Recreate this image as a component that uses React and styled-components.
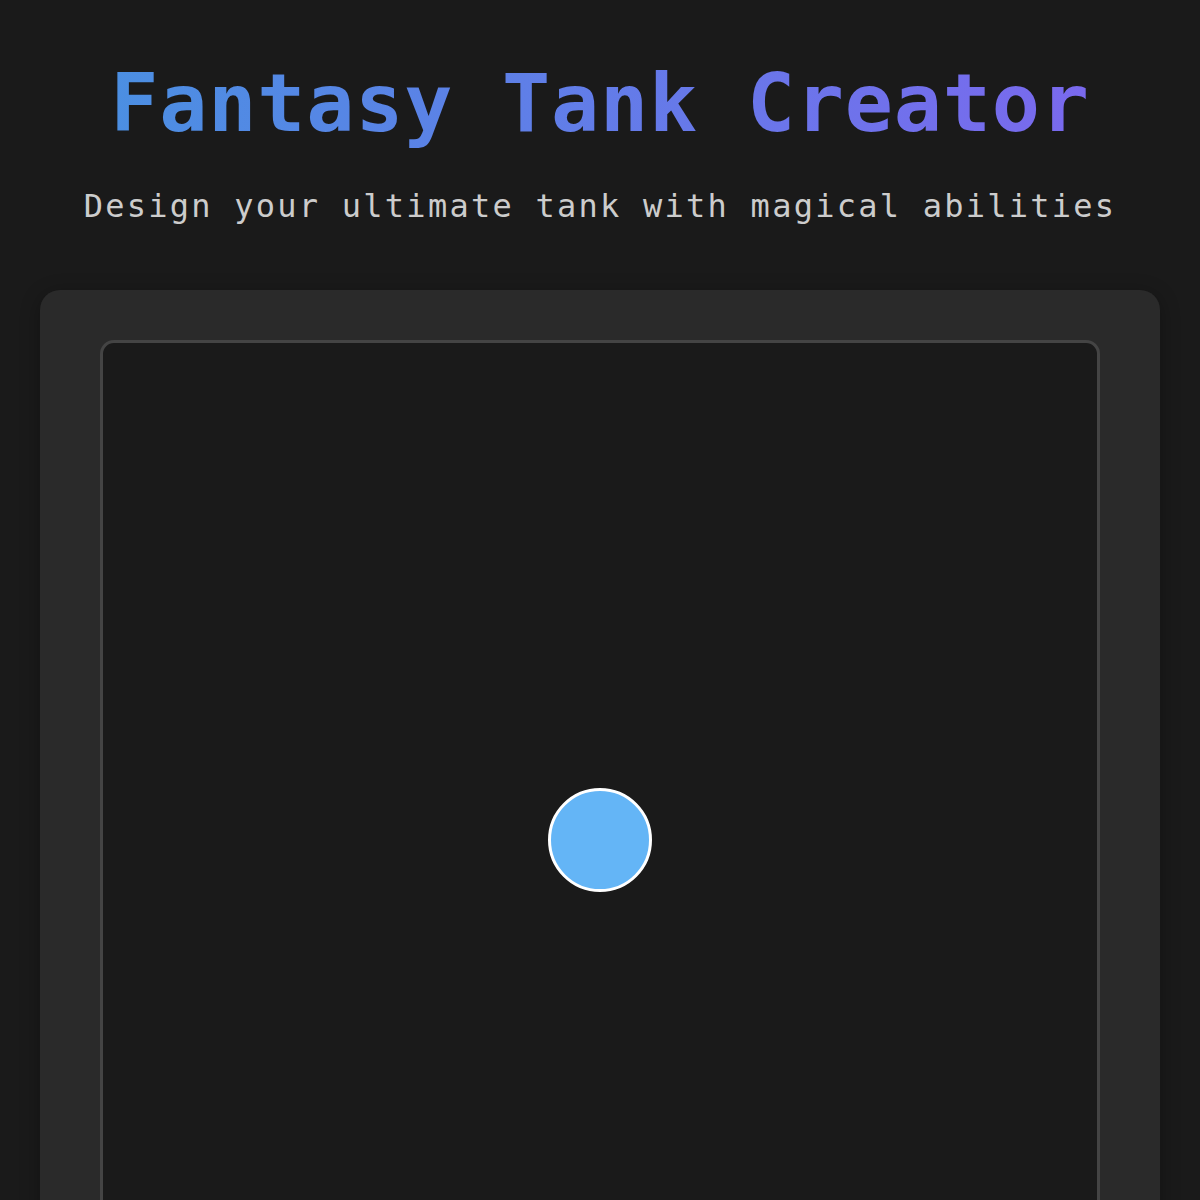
import React from 'react';
import styled, { createGlobalStyle } from 'styled-components';

const GlobalStyle = createGlobalStyle`
  html, body {
    margin: 0;
    padding: 0;
    background: #1a1a1a;
  }
  body {
    font-family: "DejaVu Sans Mono", "Liberation Mono", monospace;
    color: #e0e0e0;
  }
`;

const Page = styled.div`
  min-height: 1200px;
  padding: 56px 40px 0;
  box-sizing: border-box;
  display: flex;
  flex-direction: column;
  align-items: center;
`;

const Header = styled.header`
  text-align: center;
  margin-bottom: 65px;
`;

const Title = styled.h1`
  margin: 0;
  font-size: 80px;
  font-weight: 700;
  line-height: 1.2;
  letter-spacing: 0.8px;
  background: linear-gradient(90deg, #4a90e2, #7b68ee);
  -webkit-background-clip: text;
  background-clip: text;
  color: transparent;
`;

const Subtitle = styled.p`
  margin: 35px 0 0;
  font-size: 32px;
  letter-spacing: 2.25px;
  color: #cccccc;
`;

const Panel = styled.main`
  width: 100%;
  max-width: 1120px;
  box-sizing: border-box;
  background: #2a2a2a;
  border-radius: 20px;
  padding: 50px 0;
  box-shadow: 0 4px 20px rgba(0, 0, 0, 0.3);
  display: flex;
  justify-content: center;
`;

const Canvas = styled.div`
  width: 1000px;
  height: 1000px;
  box-sizing: border-box;
  border: 3px solid #444;
  border-radius: 14px;
  background: #1a1a1a;
  display: flex;
  align-items: center;
  justify-content: center;
`;

const Tank = styled.div`
  width: ${p => p.size}px;
  height: ${p => p.size}px;
  border-radius: 50%;
  background: ${p => p.color};
  border: 3px solid #ffffff;
  box-sizing: border-box;
`;

export default function App() {
  return (
    <>
      <GlobalStyle />
      <Page>
        <Header>
          <Title>Fantasy Tank Creator</Title>
          <Subtitle>Design your ultimate tank with magical abilities</Subtitle>
        </Header>
        <Panel>
          <Canvas>
            <Tank size={104} color="#64b5f6" />
          </Canvas>
        </Panel>
      </Page>
    </>
  );
}
